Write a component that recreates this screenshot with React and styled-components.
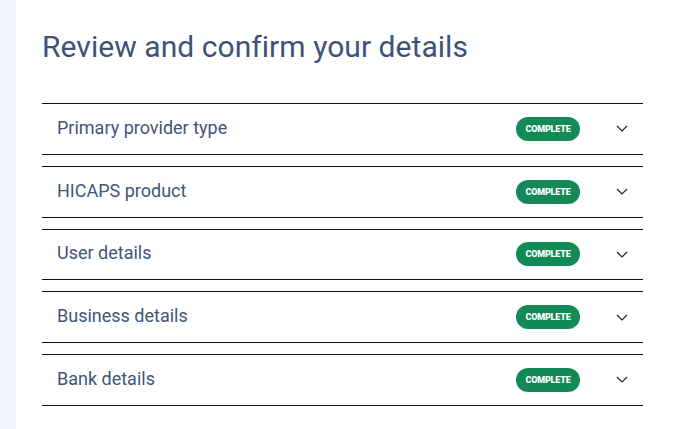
import React from 'react'
import styled, { createGlobalStyle } from 'styled-components'

const Global = createGlobalStyle`
    html, body {
        margin: 0;
        padding: 0;
        background: #ffffff;
        font-family: Roboto, "Liberation Sans", sans-serif;
    }
`

const Page = styled.div`
    display: flex;
    min-height: 429px;
`

const SideStrip = styled.div`
    width: 16px;
    flex-shrink: 0;
    background: #f1f6fe;
`

const Main = styled.main`
    padding: 29px 0 0 26px;
    width: 601px;
`

const Title = styled.h1`
    margin: 0 0 39px;
    font-size: 30px;
    line-height: 35px;
    font-weight: 400;
    letter-spacing: 0.05px;
    color: #3e5279;
`

const List = styled.div`
    display: flex;
    flex-direction: column;
    gap: 11px;
`

const Row = styled.div`
    display: flex;
    align-items: center;
    height: 49.75px;
    border-top: 1px solid #111;
    border-bottom: 1px solid #111;
    padding: 0 0 0 15px;
`

const Label = styled.span`
    flex: 1;
    padding-bottom: 3px;
    font-size: 18px;
    color: #40557c;
`

const Badge = styled.span`
    display: inline-flex;
    align-items: center;
    justify-content: center;
    width: 64px;
    height: 24px;
    border-radius: 12px;
    background: #138a56;
    color: #fff;
    font-size: 9px;
    font-weight: 900;
    letter-spacing: -0.2px;
    text-transform: uppercase;
`

const Toggle = styled.button`
    display: flex;
    align-items: center;
    justify-content: center;
    width: 20px;
    height: 20px;
    margin: 0 11px 0 32px;
    padding: 0;
    border: 0;
    background: none;
    color: #222;
`

const Chevron = () => (
    <svg width="12" height="7" viewBox="0 0 12 7" fill="none">
        <path d="M1 1l5 5 5-5" stroke="currentColor" strokeWidth="1.2" />
    </svg>
)

const sections = [
    'Primary provider type',
    'HICAPS product',
    'User details',
    'Business details',
    'Bank details',
]

const App = () => (
    <Page>
        <Global />
        <SideStrip />
        <Main>
            <Title>Review and confirm your details</Title>
            <List>
                {sections.map(name => (
                    <Row key={name}>
                        <Label>{name}</Label>
                        <Badge>Complete</Badge>
                        <Toggle type="button" aria-label={`Expand ${name}`}>
                            <Chevron />
                        </Toggle>
                    </Row>
                ))}
            </List>
        </Main>
    </Page>
)

export default App
